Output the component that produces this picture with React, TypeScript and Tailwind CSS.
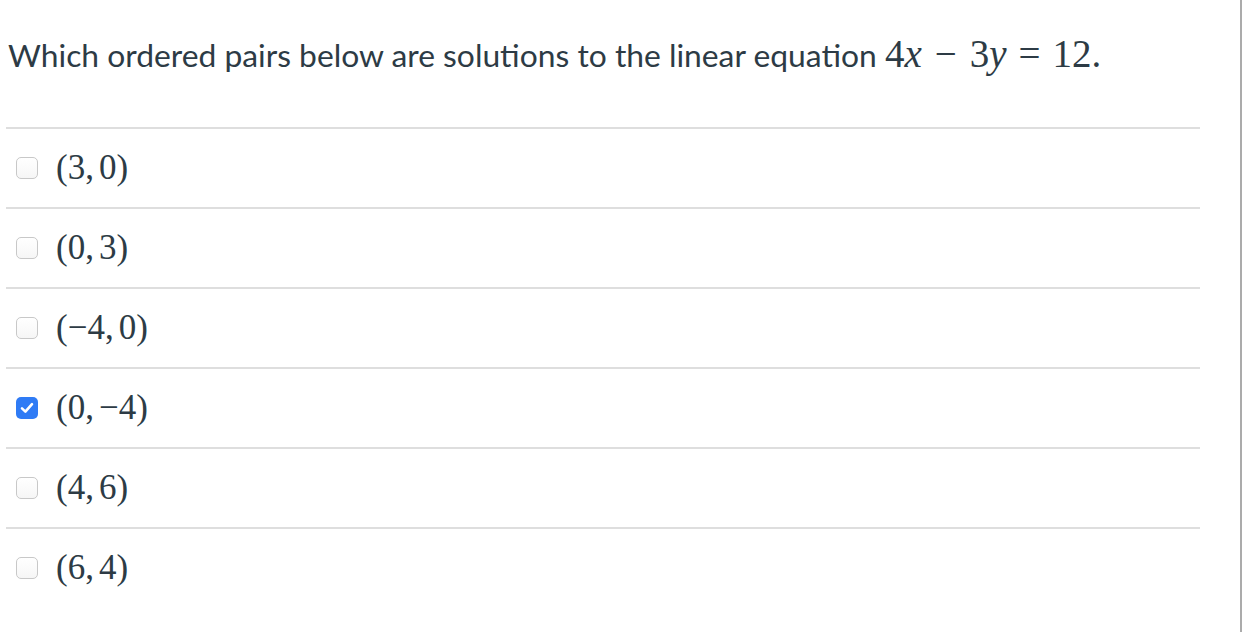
import React from "react";

const options = [
    { label: ["(", "3", ",", "0", ")"], checked: false },
    { label: ["(", "0", ",", "3", ")"], checked: false },
    { label: ["(", "\u22124", ",", "0", ")"], checked: false },
    { label: ["(", "0", ",", "\u22124", ")"], checked: true },
    { label: ["(", "4", ",", "6", ")"], checked: false },
    { label: ["(", "6", ",", "4", ")"], checked: false },
];

const mathFont = "[font-family:'Liberation_Serif','Times_New_Roman',serif]";

const Box = ({ checked }: { checked: boolean }) =>
    checked ? (
        <span className="flex h-[22px] w-[22px] items-center justify-center rounded-[5px] bg-[#2f7bf5]">
            <svg width="16" height="16" viewBox="0 0 16 16" fill="none">
                <path d="M3 8.4 L6.4 11.6 L13 4.2" stroke="white" strokeWidth="2.6" strokeLinecap="round" strokeLinejoin="round" />
            </svg>
        </span>
    ) : (
        <span className="block h-[22px] w-[22px] rounded-[5px] border border-[#c8c8c8] bg-gradient-to-b from-white to-[#f6f6f6]" />
    );

const App = () => {
    return (
        <div className="flex h-[632px] w-[1250px] bg-white text-[#2d3b45]">
            <div className="w-[1240px]">
                <div className="flex h-[127px] items-start pl-[8px] pt-[33px]">
                    <p className="whitespace-nowrap text-[31.8px] leading-[42px] [font-family:Lato,'Liberation_Sans',sans-serif]">
                        Which ordered pairs below are solutions to the linear equation{" "}
                        <span className={`${mathFont} text-[39px]`}>
                            4<i>x</i>
                            <span className="mx-[13px]">{"\u2212"}</span>3<i>y</i>
                            <span className="mx-[12px]">=</span>12.
                        </span>
                    </p>
                </div>
                <div className="ml-[6px] w-[1194px]">
                    {options.map((o, i) => (
                        <div key={i} className="flex h-[80px] items-center gap-[18px] border-t-2 border-[#dedede] pl-[10px]">
                            <Box checked={o.checked} />
                            <span className={`${mathFont} -mt-[2px] text-[35px] leading-none`}>
                                {o.label[0]}
                                {o.label[1]}
                                {o.label[2]}
                                <span className="ml-[5px]">{o.label[3]}</span>
                                {o.label[4]}
                            </span>
                        </div>
                    ))}
                </div>
            </div>
            <div className="h-full w-[2px] bg-[#ababab]" />
        </div>
    );
};

export default App;
